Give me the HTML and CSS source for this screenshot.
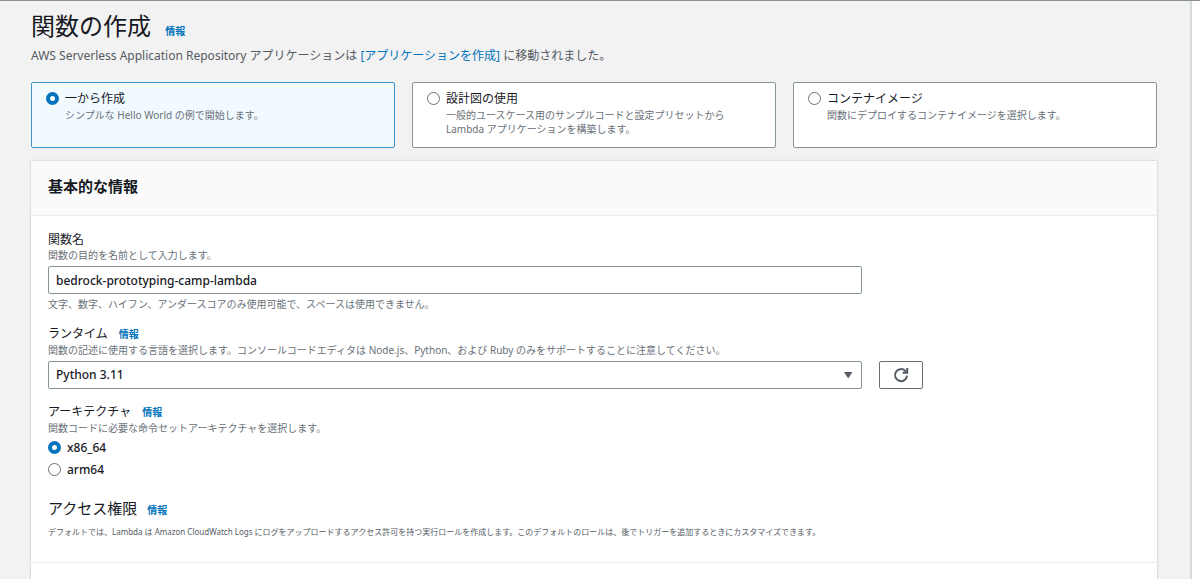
FILE: index.html
```html
<!DOCTYPE html>
<html lang="ja">
<head>
<meta charset="utf-8">
<title>関数の作成</title>
<link rel="stylesheet" href="styles.css">
</head>
<body>
<div class="shell">
  <main class="main">
    <header class="page-header">
      <h1 class="page-title">関数の作成 <a class="info info-title" href="#">情報</a></h1>
      <p class="page-note">AWS Serverless Application Repository アプリケーションは <a href="#">[アプリケーションを作成]</a> に移動されました。</p>
    </header>

    <div class="tiles" role="radiogroup" aria-label="作成方法">
      <label class="tile tile-selected">
        <input class="radio" type="radio" name="method" checked>
        <span class="tile-text"><span class="tile-label">一から作成</span><span class="hint">シンプルな Hello World の例で開始します。</span></span>
      </label>
      <label class="tile">
        <input class="radio" type="radio" name="method">
        <span class="tile-text"><span class="tile-label">設計図の使用</span><span class="hint">一般的ユースケース用のサンプルコードと設定プリセットから Lambda アプリケーションを構築します。</span></span>
      </label>
      <label class="tile">
        <input class="radio" type="radio" name="method">
        <span class="tile-text"><span class="tile-label">コンテナイメージ</span><span class="hint">関数にデプロイするコンテナイメージを選択します。</span></span>
      </label>
    </div>

    <section class="panel">
      <h2 class="panel-title">基本的な情報</h2>
      <div class="panel-body">
        <div class="field">
          <label class="label" for="fn-name">関数名</label>
          <p class="hint">関数の目的を名前として入力します。</p>
          <div class="control-row">
            <input class="control" id="fn-name" type="text" value="bedrock-prototyping-camp-lambda">
          </div>
          <p class="hint constraint">文字、数字、ハイフン、アンダースコアのみ使用可能で、スペースは使用できません。</p>
        </div>

        <div class="field">
          <div class="label-row"><label class="label" for="runtime">ランタイム</label><a class="info" href="#">情報</a></div>
          <p class="hint">関数の記述に使用する言語を選択します。コンソールコードエディタは Node.js、Python、および Ruby のみをサポートすることに注意してください。</p>
          <div class="control-row">
            <div class="select-wrap">
              <select class="control" id="runtime"><option>Python 3.11</option></select>
              <svg class="caret" viewBox="0 0 10 8" aria-hidden="true"><path d="M1 1h8.4L5.2 7.6z"/></svg>
            </div>
            <button class="refresh" type="button" aria-label="更新">
              <svg viewBox="0 0 16 16" aria-hidden="true"><path d="M14 8.6A6 6 0 1 1 12.2 3.8L14 5.4"/><path d="M14.2 1v4.8H9.6"/></svg>
            </button>
          </div>
        </div>

        <div class="field" role="radiogroup" aria-labelledby="arch">
          <div class="label-row"><span class="label" id="arch">アーキテクチャ</span><a class="info" href="#">情報</a></div>
          <p class="hint">関数コードに必要な命令セットアーキテクチャを選択します。</p>
          <div class="options">
            <label class="option"><input class="radio" type="radio" name="arch" checked>x86_64</label>
            <label class="option"><input class="radio" type="radio" name="arch">arm64</label>
          </div>
        </div>

        <h3 class="sub-title">アクセス権限 <a class="info info-sub" href="#">情報</a></h3>
        <p class="fine">デフォルトでは、Lambda は Amazon CloudWatch Logs にログをアップロードするアクセス許可を持つ実行ロールを作成します。このデフォルトのロールは、後でトリガーを追加するときにカスタマイズできます。</p>
      </div>
      <div class="panel-footer"></div>
    </section>
  </main>
  <aside class="rail"></aside>
</div>
</body>
</html>
```
FILE: styles.css
```css
* { box-sizing: border-box; }

body {
  margin: 0;
  background: #f2f2f2;
  color: #16191f;
  font: 12px/18px "Noto Sans", "Noto Sans CJK JP", sans-serif;
}

h1, h2, h3, p { margin: 0; }
a { color: #0073bb; text-decoration: none; }

.shell {
  display: flex;
  min-height: 100vh;
  border-top: 1px solid #879196;
}
.main {
  display: flex;
  flex: 1;
  flex-direction: column;
  min-width: 0;
  padding: 9px 33px 0 31px;
}
.rail { width: 10px; background: #fff; border-left: 2px solid #d5dbdb; }

.page-title { font-size: 24px; line-height: 32px; font-weight: 400; }
.page-note { color: #545b64; }
.info { font-size: 10px; font-weight: 700; }
.info-title { margin-left: 8px; }
.info-sub { margin-left: 6px; }

.tiles {
  display: grid;
  grid-template-columns: repeat(3, 1fr);
  gap: 17px;
  margin-top: 17px;
}
.tile {
  display: flex;
  gap: 6px;
  min-height: 66px;
  padding: 7px 14px;
  background: #fff;
  border: 1px solid #879596;
  border-radius: 2px;
}
.tile-selected { background: #f1faff; border-color: #3f94cc; }
.tile-text { flex: 1; }
.tile-label { display: block; }
.hint { display: block; font-size: 10px; line-height: 14px; color: #687078; }

.radio {
  appearance: none;
  flex: none;
  width: 13px;
  height: 13px;
  margin: 2px 0 0;
  background: #fff;
  border: 1px solid #687078;
  border-radius: 50%;
}
.radio:checked { border: 4px solid #0073bb; }

.panel {
  flex: 1;
  margin-top: 13px;
  background: #fff;
  box-shadow: 0 0 2px #aab7b8;
}
.panel-title {
  padding: 14px 17px 18px;
  background: #fafafa;
  border-bottom: 1px solid #eaeded;
  font-size: 15px;
  line-height: 22px;
}
.panel-body { padding: 15px 17px 23px; }
.panel-footer { border-top: 1px solid #eaeded; }

.field { margin-bottom: 14px; }
.label { display: block; line-height: 17px; }
.label-row { display: flex; align-items: baseline; gap: 11px; }
.control-row { display: flex; gap: 17px; margin-top: 4px; }
.control {
  width: 100%;
  height: 28px;
  padding: 0 7px;
  background: #fff;
  color: #16191f;
  border: 1px solid #879596;
  border-radius: 2px;
  font: inherit;
  font-weight: 500;
  appearance: none;
}
.control-row > .control, .select-wrap { width: calc(75% - 5px); flex: none; }
.select-wrap { position: relative; }
.caret {
  position: absolute;
  top: 10px;
  right: 9px;
  width: 10px;
  height: 8px;
  fill: #545b64;
  pointer-events: none;
}
.constraint { margin-top: 3px; }
.refresh {
  display: grid;
  place-items: center;
  width: 44px;
  height: 28px;
  padding: 0;
  background: #fff;
  border: 1px solid #687078;
  border-radius: 2px;
}
.refresh svg { width: 16px; height: 16px; fill: none; stroke: #545b64; stroke-width: 2; }

.options { display: grid; gap: 4px; margin-top: 4px; }
.option { display: flex; gap: 6px; font-weight: 500; }

.sub-title { margin-top: 18px; font-size: 15px; line-height: 22px; font-weight: 400; }
.fine { margin-top: 4px; font-size: 8px; line-height: 14px; color: #545b64; }
```
